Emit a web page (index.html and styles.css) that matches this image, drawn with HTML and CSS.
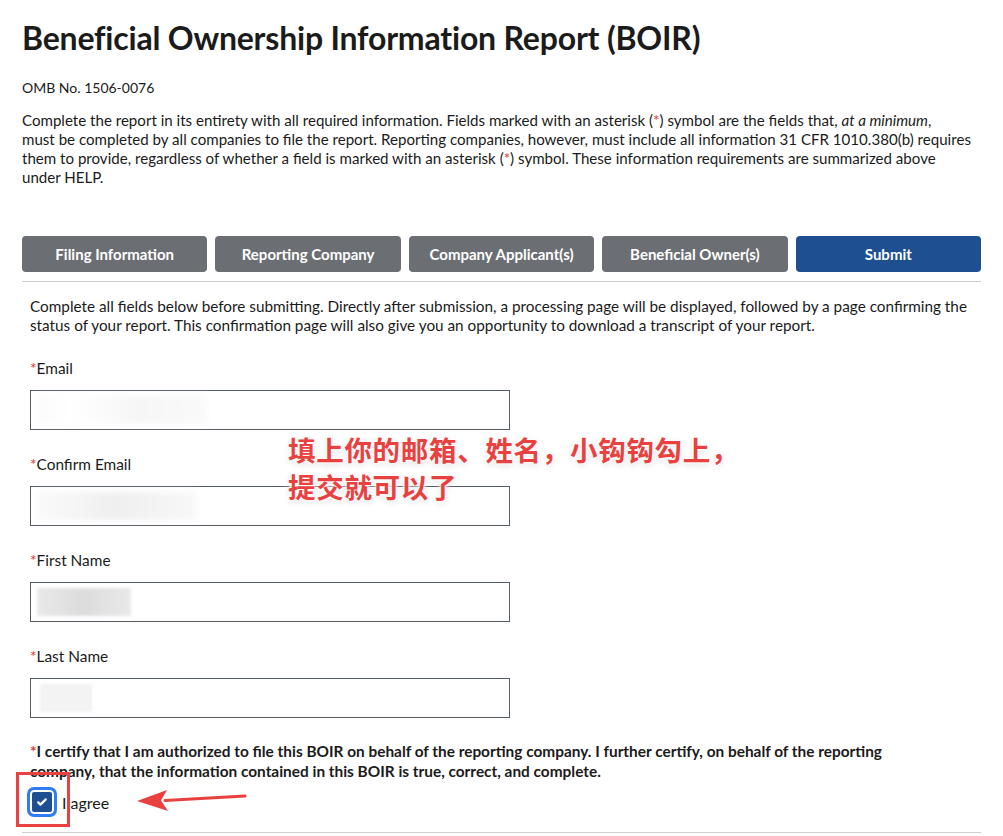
FILE: index.html
```html
<!DOCTYPE html>
<html lang="en">
<head>
<meta charset="utf-8">
<title>BOIR</title>
<link rel="stylesheet" href="styles.css">
</head>
<body>
<main class="page">
  <h1 class="title">Beneficial Ownership Information Report (BOIR)</h1>
  <p class="omb">OMB No. 1506-0076</p>
  <p class="intro">Complete the report in its entirety with all required information. Fields marked with an asterisk (<span class="req">*</span>) symbol are the fields that, <em>at a minimum</em>,<br>must be completed by all companies to file the report. Reporting companies, however, must include all information 31 CFR 1010.380(b) requires them to provide, regardless of whether a field is marked with an asterisk (<span class="req">*</span>) symbol. These information requirements are summarized above<br>under HELP.</p>

  <nav class="tabs">
    <button class="tab">Filing Information</button>
    <button class="tab">Reporting Company</button>
    <button class="tab">Company Applicant(s)</button>
    <button class="tab">Beneficial Owner(s)</button>
    <button class="tab tab-active">Submit</button>
  </nav>

  <section class="panel">
    <p class="panel-intro">Complete all fields below before submitting. Directly after submission, a processing page will be displayed, followed by a page confirming the status of your report. This confirmation page will also give you an opportunity to download a transcript of your report.</p>

    <div class="field">
      <label class="label"><span class="req">*</span>Email</label>
      <div class="input"><span class="blur blur-email"></span></div>
    </div>
    <div class="field">
      <label class="label"><span class="req">*</span>Confirm Email</label>
      <div class="input"><span class="blur blur-confirm"></span></div>
    </div>
    <div class="field">
      <label class="label"><span class="req">*</span>First Name</label>
      <div class="input"><span class="blur blur-first"></span></div>
    </div>
    <div class="field">
      <label class="label"><span class="req">*</span>Last Name</label>
      <div class="input"><span class="blur blur-last"></span></div>
    </div>

    <p class="certify"><span class="req">*</span>I certify that I am authorized to file this BOIR on behalf of the reporting company. I further certify, on behalf of the reporting company, that the information contained in this BOIR is true, correct, and complete.</p>
    <div class="agree">
      <span class="checkbox">
        <svg viewBox="0 0 16 16" width="12" height="12"><path d="M3 8.5l3 3 7-7" fill="none" stroke="#fff" stroke-width="3" stroke-linecap="round" stroke-linejoin="round"/></svg>
      </span>
      <span class="agree-text">I agree</span>
      <span class="mark-box"></span>
      <svg class="arrow" width="112" height="24" viewBox="0 0 112 24">
        <path d="M110 7 L30 11.5" stroke="#e8413f" stroke-width="3" stroke-linecap="round" fill="none"/>
        <path d="M2 12 L32 1 L26 11.5 L33 22 Z" fill="#e8413f"/>
      </svg>
    </div>
    <hr class="bottom-rule">

    <div class="note">填上你的邮箱、姓名，小钩钩勾上，<br>提交就可以了</div>
  </section>
</main>
</body>
</html>
```

FILE: styles.css
```css
* { box-sizing: border-box; }
html, body { margin: 0; padding: 0; background: #fff; }
body {
  font-family: Lato, "Noto Sans", "Liberation Sans", sans-serif;
  color: #1b1b1b;
  overflow: hidden;
  height: 836px;
}
.page {
  padding: 0 22px;
  width: 1003px;
}
.title {
  margin: 0;
  padding-top: 19px;
  font-size: 32px;
  line-height: 38px;
  font-weight: 700;
  letter-spacing: -0.2px;
  color: #1b1b1b;
}
.omb {
  margin: 0;
  padding-top: 22px;
  font-size: 14px;
  line-height: 18px;
}
.intro {
  margin: 0;
  padding-top: 14px;
  font-size: 15.1px;
  line-height: 19px;
  width: 959px;
}
.req { color: #d83933; }
.tabs {
  display: flex;
  gap: 8px;
  margin-top: 49px;
  padding-bottom: 9px;
  border-bottom: 1px solid #cfcfcf;
  width: 959px;
}
.tab {
  flex: 1;
  height: 36px;
  border: none;
  border-radius: 4px;
  background: #6b6e72;
  color: #fff;
  font-family: Lato, "Noto Sans", sans-serif;
  font-weight: 700;
  font-size: 15px;
  padding: 0;
}
.tab-active { background: #1d4f91; }
.panel {
  position: relative;
  padding: 0 0 0 8px;
  width: 959px;
}
.panel-intro {
  margin: 0;
  padding-top: 15px;
  font-size: 15.3px;
  line-height: 19px;
}
.field { margin-top: 25px; }
.field:first-of-type { margin-top: 24px; }
.label {
  display: block;
  font-size: 15.4px;
  line-height: 19px;
  color: #1b1b1b;
}
.input {
  margin-top: 12px;
  width: 480px;
  height: 40px;
  border: 1.5px solid #565c65;
  display: flex;
  align-items: center;
  padding-left: 6px;
}
.blur {
  display: block;
  height: 28px;
  border-radius: 2px;
  filter: blur(3px);
}
.blur-email { width: 170px; background: linear-gradient(90deg, #fbfbfb, #fff 20%, #f6f6f6 60%, #fafafa); }
.blur-confirm { width: 160px; background: linear-gradient(90deg, #fafafa, #efefef 50%, #f8f8f8); }
.blur-first { width: 94px; background: linear-gradient(90deg, #e9e9e9, #dcdcdc 50%, #e9e9e9); filter: blur(1.5px); }
.blur-last { width: 52px; background: #f3f3f3; margin-left: 3px; filter: blur(1px); }
.certify {
  margin: 23px 0 0;
  font-size: 15.4px;
  line-height: 20px;
  font-weight: 700;
  width: 900px;
}
.agree {
  position: relative;
  display: flex;
  align-items: center;
  gap: 5px;
  margin-top: 6px;
  margin-left: -3px;
  height: 30px;
}
.checkbox {
  width: 30px;
  height: 30px;
  border-radius: 7px;
  border: 3px solid #2f7cf6;
  background: #1d4f91;
  box-shadow: inset 0 0 0 2px #fff;
  display: flex;
}
.checkbox svg {
  display: block;
  margin: auto;
}
.agree-text { font-size: 16px; }
.mark-box {
  position: absolute;
  left: -11px;
  top: -15px;
  width: 54px;
  height: 55px;
  border: 3px solid #e8413f;
}
.arrow {
  position: absolute;
  left: 108px;
  top: 2px;
}
.bottom-rule {
  margin: 15px 0 0 -8px;
  border: none;
  border-top: 1px solid #cfcfcf;
  width: 959px;
}
.note {
  position: absolute;
  left: 266px;
  top: 149px;
  font-family: "Noto Sans CJK SC", sans-serif;
  font-weight: 700;
  font-size: 27.5px;
  line-height: 37px;
  color: #e8413f;
  letter-spacing: 0.7px;
  text-shadow: 0 0 3px #fff, 0 0 3px #fff, 0 0 6px #fff, 0 2px 6px rgba(0,0,0,0.18);
}
```
